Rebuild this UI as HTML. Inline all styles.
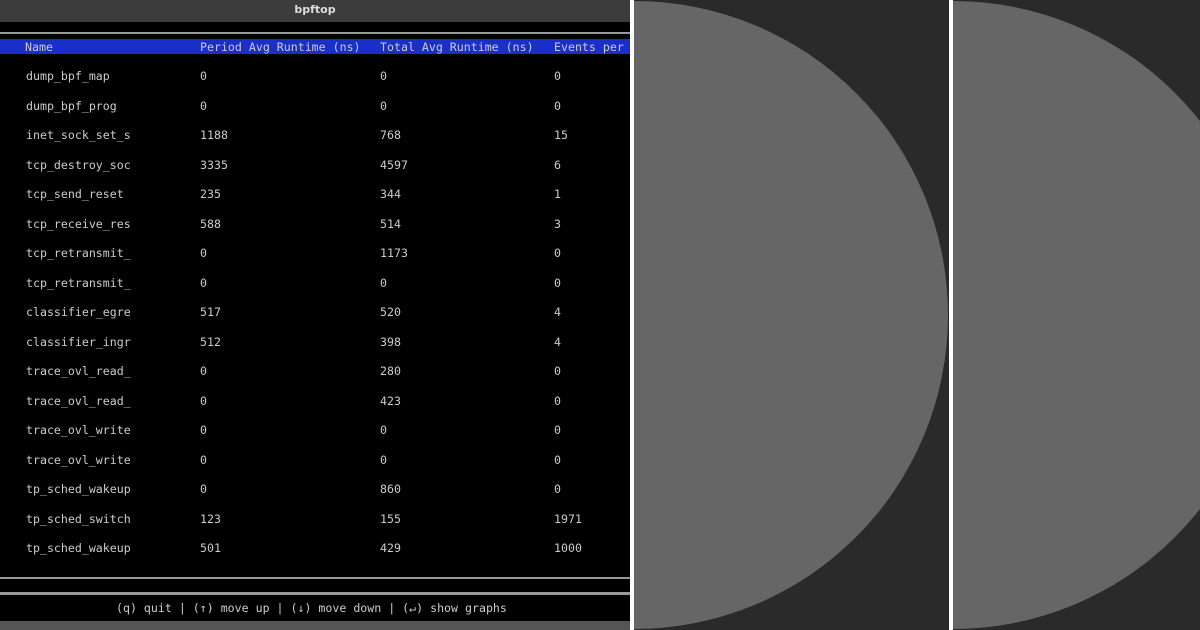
<!DOCTYPE html>
<html><head><style>
body{margin:0;width:1200px;height:630px;overflow:hidden;background:#2a2a2a;position:relative;font-family:"DejaVu Sans Mono","Liberation Mono",monospace;}
#term{position:absolute;left:0;top:0;width:630px;height:630px;background:#000;overflow:hidden;}
.title{position:absolute;left:0;top:0;width:630px;height:22px;background:#3c3c3c;color:#ddd;font:bold 11px "DejaVu Sans","Liberation Sans",sans-serif;text-align:center;line-height:20px;}
.hl{position:absolute;left:0;width:630px;height:2px;background:#999;}
.hdr{position:absolute;left:0;top:39px;width:630px;height:15px;background:#1a2ec8;}
.t{position:absolute;color:#ccc;font-size:11.6px;white-space:pre;line-height:14px;}
.w{position:absolute;top:0;width:4px;height:630px;background:#fff;}
.c{position:absolute;width:628px;height:628px;border-radius:50%;background:#666;top:1px;}
.p{position:absolute;top:0;height:630px;overflow:hidden;}
</style></head><body>
<div class="p" style="left:634px;width:315px"><div class="c" style="left:-314px"></div></div>
<div class="p" style="left:953px;width:247px"><div class="c" style="left:-314px"></div></div>
<div class="w" style="left:630px"></div>
<div class="w" style="left:949px"></div>
<div id="term">
<div class="title">bpftop</div>
<div class="hl" style="top:32px"></div>
<div class="hdr"></div>
<div class="hl" style="top:577px"></div>
<div class="hl" style="top:592px;height:3px"></div>
<div class="hl" style="top:621px;height:9px;background:#555"></div>
<div class="t" style="left:25px;top:40px">Name</div>
<div class="t" style="left:200px;top:40px">Period Avg Runtime (ns)</div>
<div class="t" style="left:380px;top:40px">Total Avg Runtime (ns)</div>
<div class="t" style="left:554px;top:40px">Events per</div>
<div class="t" style="left:116px;top:601px">(q) quit | (↑) move up | (↓) move down | (↵) show graphs</div>
<div id="rows"></div>
</div>
<script>
var d=[["dump_bpf_map",0,0,0],["dump_bpf_prog",0,0,0],["inet_sock_set_s",1188,768,15],["tcp_destroy_soc",3335,4597,6],["tcp_send_reset",235,344,1],["tcp_receive_res",588,514,3],["tcp_retransmit_",0,1173,0],["tcp_retransmit_",0,0,0],["classifier_egre",517,520,4],["classifier_ingr",512,398,4],["trace_ovl_read_",0,280,0],["trace_ovl_read_",0,423,0],["trace_ovl_write",0,0,0],["trace_ovl_write",0,0,0],["tp_sched_wakeup",0,860,0],["tp_sched_switch",123,155,1971],["tp_sched_wakeup",501,429,1000]];
var h="";d.forEach(function(r,i){var y=69+i*29.5;h+='<div class="t" style="left:26px;top:'+y+'px">'+r[0]+'</div><div class="t" style="left:200px;top:'+y+'px">'+r[1]+'</div><div class="t" style="left:380px;top:'+y+'px">'+r[2]+'</div><div class="t" style="left:554px;top:'+y+'px">'+r[3]+'</div>';});
document.getElementById("rows").innerHTML=h;
</script>
</body></html>
